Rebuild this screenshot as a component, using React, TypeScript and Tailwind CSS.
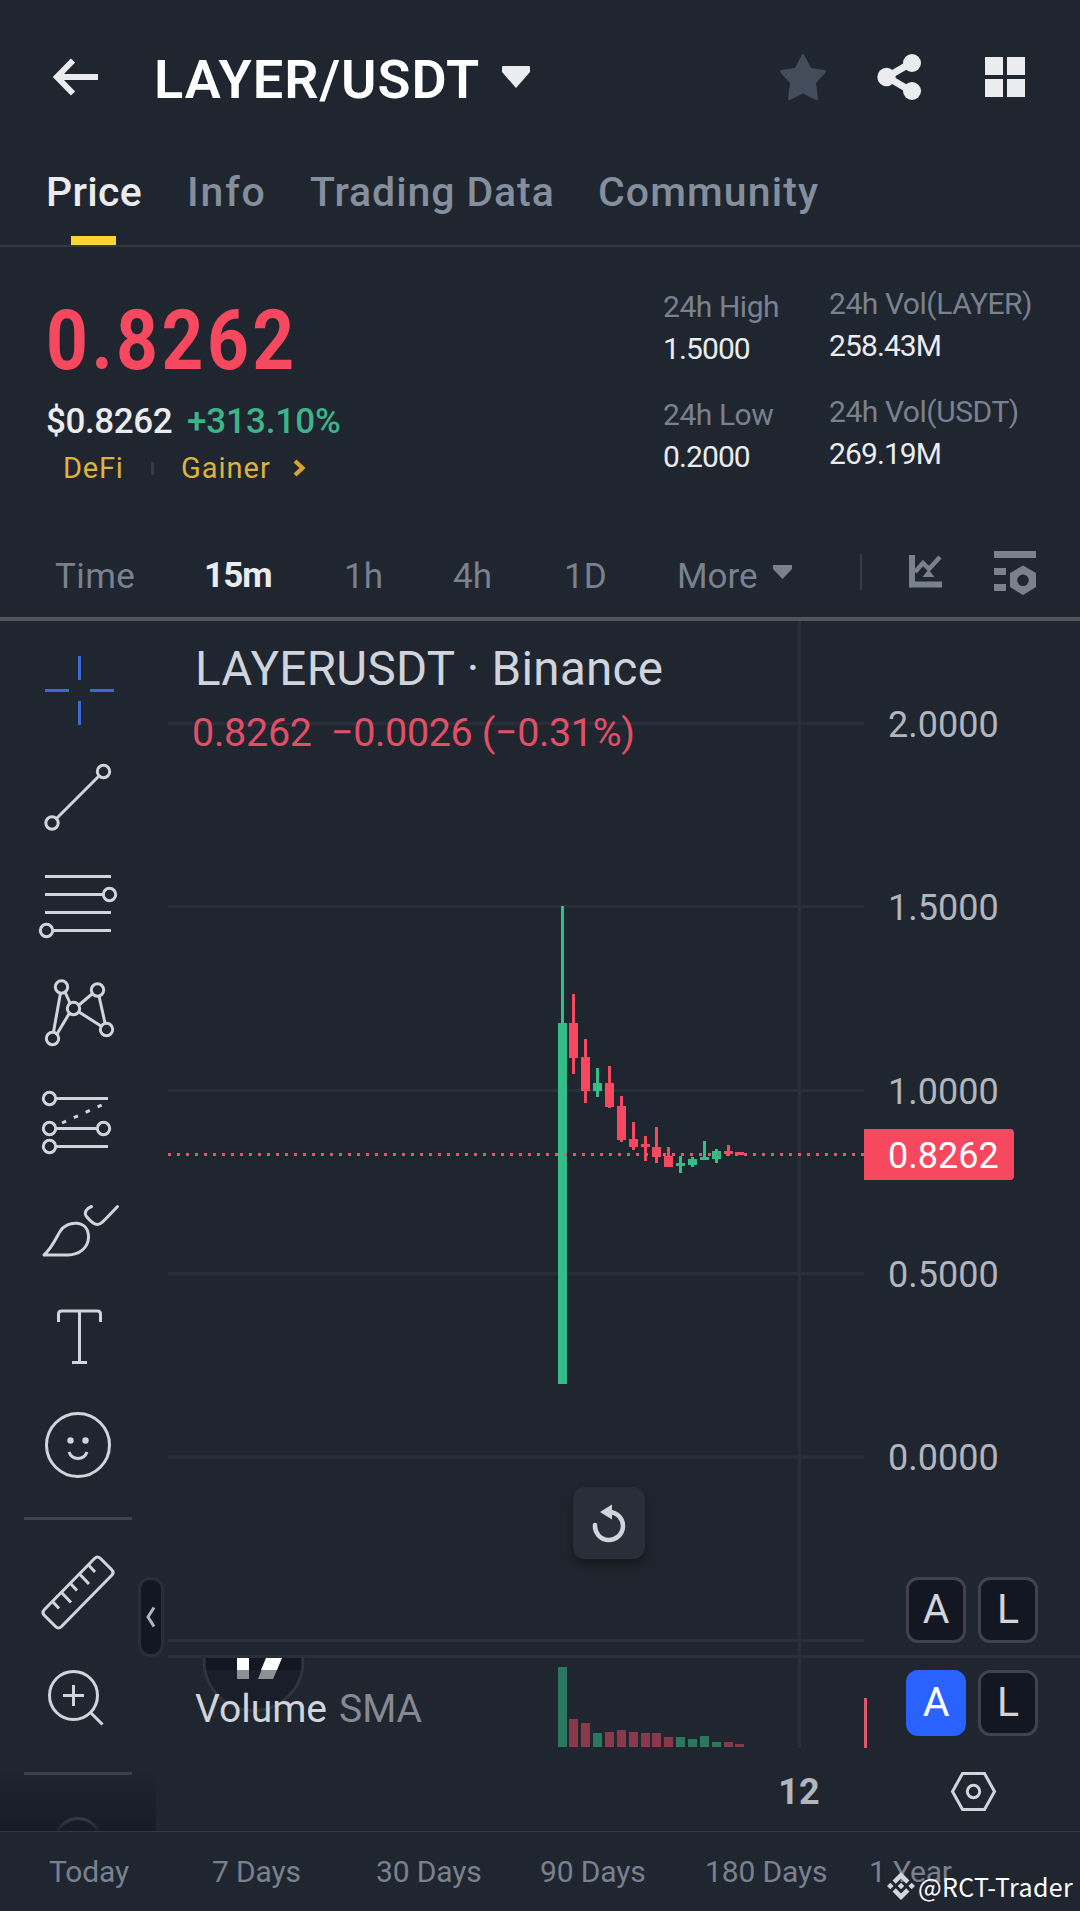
import type { ReactNode } from 'react';

const UP = '#35bd88';
const DOWN = '#f6485f';

// x, width, wick top, wick bottom, body top, body bottom, rising, volume top
const candles: [number, number, number, number, number, number, boolean, number][] = [
  [558, 9, 906, 1384, 1023, 1384, true, 1667],
  [569, 9, 994, 1074, 1023, 1058, false, 1719],
  [581, 9, 1039, 1103, 1057, 1091, false, 1723],
  [593, 9, 1068, 1097, 1083, 1091, true, 1733],
  [605, 9, 1066, 1108, 1083, 1107, false, 1732],
  [617, 9, 1096, 1142, 1106, 1140, false, 1730],
  [629, 9, 1122, 1150, 1139, 1147, false, 1732],
  [641, 9, 1136, 1161, 1144, 1147, false, 1733],
  [652, 9, 1127, 1163, 1147, 1157, false, 1733],
  [664, 9, 1147, 1167, 1156, 1167, false, 1737],
  [676, 9, 1156, 1173, 1163, 1166, true, 1737],
  [688, 9, 1157, 1167, 1159, 1165, true, 1739],
  [700, 9, 1141, 1160, 1157, 1160, true, 1736],
  [712, 9, 1149, 1163, 1151, 1159, true, 1742],
  [724, 9, 1145, 1156, 1151, 1154, false, 1742],
  [735, 9, 1152, 1155, 1152, 1155, false, 1744]
];

const gridLines = [
  { y: 723.5, label: '2.0000' },
  { y: 906.5, label: '1.5000' },
  { y: 1090.5, label: '1.0000' },
  { y: 1273.5, label: '0.5000' },
  { y: 1457, label: '0.0000' },
  { y: 1640.5, label: '' }
];

const tabs = [
  { name: 'Price', style: 'w-[141px] text-[#eaecef] tracking-[0.3px]' },
  { name: 'Info', style: 'w-[123px] text-[#848e9c] tracking-[1.9px]' },
  { name: 'Trading Data', style: 'w-[288px] text-[#848e9c] tracking-[0.9px]' },
  { name: 'Community', style: 'text-[#848e9c] tracking-[1.1px]' }
];

const ranges = [
  { name: 'Today', style: 'w-[163px]' },
  { name: '7 Days', style: 'w-[164px]' },
  { name: '30 Days', style: 'w-[164px]' },
  { name: '90 Days', style: 'w-[165px]' },
  { name: '180 Days', style: 'w-[164px]' },
  { name: '1 Year', style: '' }
];

function Tool({ children }: { children: ReactNode }) {
  return (
    <svg
      className="block h-[108px] w-[156px] shrink-0"
      viewBox="0 0 156 108"
      fill="none"
      stroke="#d1d4dc"
      strokeWidth="3"
    >
      {children}
    </svg>
  );
}

function Stat({ label, value }: { label: string; value: string }) {
  return (
    <div className="text-[30px] leading-[42px] whitespace-nowrap">
      <div className="text-[#79818f] tracking-[-0.45px]">{label}</div>
      <div className="text-[#eaecef] tracking-[-0.9px]">{value}</div>
    </div>
  );
}

function ScaleButton({ label, active = false }: { label: string; active?: boolean }) {
  const look = active
    ? 'border-[#2962ff] bg-[#2962ff] text-white'
    : 'border-[#40434e] bg-[#131722] text-[#d1d4dc]';
  return (
    <div className={`flex h-[66px] w-[60px] items-center justify-center rounded-[12px] border-[3px] pb-[2px] text-[41px] leading-none ${look}`}>
      {label}
    </div>
  );
}

function Header() {
  return (
    <header className="flex h-[154px] items-center pl-[53px]">
      <svg className="w-[45px] h-[38px]" viewBox="0 0 45 38" fill="none" stroke="#eaecef" strokeWidth="6">
        <path d="M45 19H4M20 2.5L4 19l16 16.5" />
      </svg>
      <h1 className="ml-[56px] w-[348px] pt-[6px] text-[54px] leading-none font-semibold whitespace-nowrap text-white tracking-[1px]">
        LAYER/USDT
      </h1>
      <svg className="w-[28px] h-[22px]" viewBox="0 0 28 22" fill="#eaecef">
        <path d="M1 0h26q1 0 1 1v5L14 22 0 6V1q0-1 1-1z" />
      </svg>
      <svg className="ml-[250px] w-[46px] h-[48px]" viewBox="0 0 46 48" fill="#434c5a">
        <path d="M23 1q1 0 1.600 1.400L31 15l13.500 2q2.400.7.700 2.900L36 30l2 15.500q0 2.500-2.200 1.600L23 40.500 10.200 47.100Q8 48 8 45.500L10 30 .8 19.900Q-.9 17.700 1.500 17L15 15l6.400-12.600Q22 1 23 1z" />
      </svg>
      <svg className="ml-[51px] w-[45px] h-[46px]" viewBox="0 0 45 46" fill="#eaecef">
        <path d="M34 9L10 23l24 14" fill="none" stroke="#eaecef" strokeWidth="7" />
        <circle cx="35" cy="9" r="9" />
        <circle cx="9.500" cy="23" r="9.200" />
        <circle cx="35" cy="37" r="9" />
      </svg>
      <div className="ml-[63px] grid w-[40px] grid-cols-2 gap-[4px]">
        <span className="h-[18px] bg-[#eaecef]" />
        <span className="h-[18px] bg-[#eaecef]" />
        <span className="h-[18px] bg-[#eaecef]" />
        <span className="h-[18px] bg-[#eaecef]" />
      </div>
    </header>
  );
}

function PriceSummary() {
  return (
    <section className="flex h-[286px]">
      <div className="w-[663px] pt-[52px] pl-[46px]">
        <div className="origin-left scale-x-87 text-[84px] leading-[84px] font-bold text-[#f6485f] tracking-[4px]">
          0.8262
        </div>
        <div className="mt-[19px] flex text-[35px] leading-[40px] font-medium whitespace-nowrap">
          <span className="w-[141px] text-[#eaecef] tracking-[-0.4px]">$0.8262</span>
          <span className="text-[#3cb488] tracking-[-0.1px]">+313.10%</span>
        </div>
        <div className="mt-[8px] flex items-center pl-[17px] text-[29px] leading-[36px] text-[#deb33b]">
          <span className="w-[88px] tracking-[0.8px]">DeFi</span>
          <span className="h-[13px] w-[3px] bg-[#343b46]" />
          <span className="ml-[27px] w-[112px] tracking-[1px]">Gainer</span>
          <svg className="w-[13px] h-[18px]" viewBox="0 0 13 18" fill="none" stroke="#d6a42a" strokeWidth="4.200">
            <path d="M2 2l7.500 7L2 16" />
          </svg>
        </div>
      </div>
      <div className="flex w-[166px] flex-col gap-[24px] pt-[39px]">
        <Stat label="24h High" value="1.5000" />
        <Stat label="24h Low" value="0.2000" />
      </div>
      <div className="flex flex-col gap-[24px] pt-[36px]">
        <Stat label="24h Vol(LAYER)" value="258.43M" />
        <Stat label="24h Vol(USDT)" value="269.19M" />
      </div>
    </section>
  );
}

function Intervals() {
  return (
    <div className="flex h-[88px] items-center border-b-[4px] border-[#50555e] pl-[55px] text-[35px] text-[#79818f]">
      <span className="w-[149px] pt-[4px] tracking-[0.4px]">Time</span>
      <span className="w-[140px] pt-[3px] font-bold text-[#eaecef] tracking-[-0.9px]">15m</span>
      <span className="w-[109px] pt-[4px]">1h</span>
      <span className="w-[111px] pt-[4px]">4h</span>
      <span className="w-[113px] pt-[4px]">1D</span>
      <span className="w-[96px] pt-[4px]">More</span>
      <svg className="mb-[6px] w-[19px] h-[14px]" viewBox="0 0 19 14" fill="#79818f">
        <path d="M0 0h19v4l-9.500 10L0 4z" />
      </svg>
      <span className="mb-[7px] ml-[68px] h-[36px] w-[2px] bg-[#343b46]" />
      <svg className="mb-[7px] ml-[47px] w-[33px] h-[33px]" viewBox="0 0 33 33" fill="none" stroke="#79818f">
        <path d="M3 0v29.500h30" strokeWidth="6" />
        <path d="M6 17l8-9 6 6L31 2" strokeWidth="4.500" />
        <path d="M19.500 14.500l6 7.500h-12z" fill="#79818f" stroke="none" />
      </svg>
      <svg className="mb-[4px] ml-[52px] w-[42px] h-[44px]" viewBox="0 0 42 44" fill="#79818f">
        <path d="M0 0h42v7H0zM0 17h12v7H0zM0 33h12v7H0z" />
        <path fillRule="evenodd" d="M29 14.500l13 7.500v14l-13 8-13-8V22zM29 23.500a5.800 5.800 0 100 11.600 5.800 5.800 0 000-11.600z" />
      </svg>
    </div>
  );
}

function Toolbar() {
  return (
    <aside className="flex w-[168px] flex-col pt-[16px]">
      <Tool>
        <path d="M79.500 19v24M79.500 64v24M45 53.500h24M90 53.500h24" stroke="#3d68d8" />
      </Tool>
      <Tool>
        <circle cx="52" cy="78" r="6.200" />
        <circle cx="103.500" cy="26.500" r="6.200" />
        <path d="M56.500 73.500L99 31" />
      </Tool>
      <Tool>
        <path d="M45 23.500h66M45 41.500h58M45 59.500h66M53 77.500h58" />
        <circle cx="109.500" cy="41.500" r="6.200" />
        <circle cx="46.500" cy="77.500" r="6.200" />
      </Tool>
      <Tool>
        <circle cx="61.500" cy="26" r="6.200" />
        <circle cx="97.500" cy="29" r="6.200" />
        <circle cx="73.500" cy="47.500" r="6.200" />
        <circle cx="106.500" cy="68.500" r="6.200" />
        <circle cx="52.500" cy="77.500" r="6.200" />
        <path d="M60.500 32L53.500 71M65 31l5 11M69.500 52L57 73M79 44l13-11M79 51l22 14M99 35l6 27" />
      </Tool>
      <Tool>
        <circle cx="49.500" cy="29.500" r="6.200" />
        <circle cx="49.500" cy="59.500" r="6.200" />
        <circle cx="103.500" cy="59.500" r="6.200" />
        <circle cx="49.500" cy="77.500" r="6.200" />
        <path d="M56 29.500h52M56 59.500h41M56 77.500h52" />
        <path d="M62 54l42-19" strokeDasharray="4.500 8.500" />
      </Tool>
      <Tool>
        <path d="M44 78C52 71 57 59 60 54.500c7-12 29-12 28.500 6C88 71 79 78 68 78z" strokeLinejoin="round" />
        <path d="M91.500 29.500c-5 2-8 6-5 10 4 5 7 8 11 8 3 0 4-1 20-18" strokeLinecap="round" />
      </Tool>
      <Tool>
        <path d="M58.500 37v-8q0-3 3-3h36q3 0 3 3v8M79.500 26v51M72 77.500h15" />
      </Tool>
      <Tool>
        <circle cx="78" cy="52" r="31.500" />
        <circle cx="70.500" cy="47.500" r="3.200" fill="#d1d4dc" stroke="none" />
        <circle cx="85.500" cy="47.500" r="3.200" fill="#d1d4dc" stroke="none" />
        <path d="M69 59c3 8.500 15 8.500 18 0" />
      </Tool>
      <div className="mt-[16px] ml-[24px] h-[3px] w-[108px] shrink-0 bg-[#3f434d]" />
      <div className="h-[16px] shrink-0" />
      <Tool>
        <path
          d="M44.500 73.500l50-51q3-3 6 0l11 11q3 3 0 6l-50 51q-3 3-6 0l-11-11q-3-3 0-6z"
          strokeLinejoin="round"
        />
        <path d="M53 66l6 6.500M62 57l9 9.500M71 48l6 6.500M80 38.500l9 9.500M89 29.500l6 6.500" />
      </Tool>
      <Tool>
        <circle cx="73.500" cy="51.500" r="24" />
        <path d="M63 51.500h21M73.500 41v21M91 69l11.500 11.500" />
      </Tool>
      <div className="relative h-[79px] w-[156px] overflow-hidden">
        <div className="mt-[20px] ml-[24px] h-[3px] w-[108px] bg-[#41454f]" />
        <svg className="mt-[42px] ml-[54px] h-[48px] w-[48px]" viewBox="0 0 48 48" fill="none" stroke="#a0a4ae" strokeWidth="3">
          <circle cx="24" cy="24" r="22.500" />
        </svg>
        <div className="absolute inset-x-0 top-[12px] bottom-0 bg-linear-to-b from-[#171b27]/0 to-[#171b27]/95" />
      </div>
    </aside>
  );
}

function Chart() {
  return (
    <div className="relative w-[912px]">
      <svg className="block h-[1210px] w-[912px]" viewBox="168 621 912 1210" fontFamily="Roboto, sans-serif">
        {gridLines.map((line) => (
          <g key={line.y}>
            <path d={`M168 ${line.y}H864`} stroke="#292f38" strokeWidth="3" />
            <text x="888" y={line.y + 13} fontSize="36" fill="#b2b5be">{line.label}</text>
          </g>
        ))}
        <path d="M799.500 621V1748" stroke="#292f38" strokeWidth="3" />
        <path d="M168 1656.500H1080" stroke="#292f38" strokeWidth="3" />

        {candles.map(([x, w, high, low, top, bottom, up, vol]) => (
          <g key={x} fill={up ? UP : DOWN}>
            <rect x={x + 3} y={high} width="3" height={low - high} />
            <rect x={x} y={top} width={w} height={bottom - top} />
            <rect x={x} y={vol} width={w} height={1747 - vol} fill={up ? '#2b775f' : '#8a394a'} />
          </g>
        ))}
        <path d="M168 1154.500H864" stroke="#e0566b" strokeWidth="3" strokeDasharray="3 6" />
        <path d="M864 1129h146q4 0 4 4v43q0 4-4 4H864z" fill="#f6485f" />
        <text x="888" y="1167.500" fontSize="36" fill="#fff">0.8262</text>
        <rect x="864" y="1698" width="3" height="50" fill="#e0566b" />

        <text x="195" y="685" fontSize="47.500" fill="#d1d4dc" textLength="468">LAYERUSDT · Binance</text>
        <text x="192" y="746" fontSize="39.500" fill="#e04f66" textLength="120">0.8262</text>
        <text x="331" y="746" fontSize="39.500" fill="#e04f66" textLength="304">−0.0026 (−0.31%)</text>

        <clipPath id="pane">
          <rect x="168" y="1658" width="300" height="100" />
        </clipPath>
        <g clipPath="url(#pane)">
          <circle cx="253.500" cy="1661" r="49.500" fill="#1a1e29" stroke="#2f343f" strokeWidth="3" />
          <path d="M206 1658h95v12h-95z" fill="#131722" />
          <path d="M237 1658h12v12h-12zM266 1658h16l-5 12h-16z" fill="#fff" />
          <path d="M237 1670h12v9h-12zM261.500 1670h15.500l-4 9h-15z" fill="#8d9096" />
        </g>
        <text x="195" y="1722" fontSize="39" fill="#d1d4dc" textLength="132">Volume</text>
        <text x="339" y="1722" fontSize="39" fill="#868993" textLength="83">SMA</text>
        <text x="799" y="1804" fontSize="36" fontWeight="700" fill="#b2b5be" textAnchor="middle">12</text>

        <g fill="none" stroke="#d1d4dc" strokeWidth="3">
          <path d="M962.500 1773.500h22l10 18-10 18h-22l-10-18z" />
          <circle cx="973.500" cy="1791.500" r="6.200" />
        </g>
      </svg>

      <div className="absolute top-[866px] left-[405px] h-[72px] w-[72px] rounded-[12px] bg-[#2a2e39] shadow-[0_6px_12px_rgba(0,0,0,0.35)]">
        <svg className="h-[72px] w-[72px]" viewBox="0 0 72 72" fill="none" stroke="#d1d4dc" strokeWidth="4.500">
          <path d="M22 38A14 14 0 1037 25" strokeLinecap="round" />
          <path d="M27 25l12-7.500v15z" fill="#d1d4dc" stroke="none" />
        </svg>
      </div>

      <div className="absolute top-[956px] left-[738px] flex gap-[12px]">
        <ScaleButton label="A" />
        <ScaleButton label="L" />
      </div>
      <div className="absolute top-[1049px] left-[738px] flex gap-[12px]">
        <ScaleButton label="A" active />
        <ScaleButton label="L" />
      </div>

      {/* toolbar collapse handle */}
      <div className="absolute top-[956px] left-[-30px] flex h-[80px] w-[26px] items-center justify-center rounded-[12px] border-[3px] border-[#2a2e39] bg-[#131722]">
        <svg className="w-[10px] h-[22px]" viewBox="0 0 10 22" fill="none" stroke="#b2b5be" strokeWidth="3">
          <path d="M8 1.500L2 11l6 9.500" />
        </svg>
      </div>
    </div>
  );
}

export default function App() {
  return (
    <div className="relative h-[1911px] w-[1080px] overflow-hidden bg-[#1f262f] font-[Roboto,sans-serif]">
      <Header />
      <nav className="relative flex h-[93px] border-b-2 border-[#333943] pl-[46px] text-[41px] leading-[76px] font-medium whitespace-nowrap">
        {tabs.map((tab) => (
          <span key={tab.name} className={tab.style}>{tab.name}</span>
        ))}
        <span className="absolute bottom-0 left-[71px] h-[9px] w-[45px] bg-[#fcd535]" />
      </nav>
      <PriceSummary />
      <Intervals />
      <div className="flex h-[1210px]">
        <Toolbar />
        <Chart />
      </div>
      <footer className="flex h-[80px] items-center border-t border-[#333943] pl-[49px] text-[30px] whitespace-nowrap text-[#79818f] tracking-[-0.15px]">
        {ranges.map((range) => (
          <span key={range.name} className={range.style}>{range.name}</span>
        ))}
      </footer>

      <div className="absolute right-[7px] bottom-[7px] flex items-center text-white">
        <svg className="w-[28px] h-[28px]" viewBox="0 0 28 28" fill="#d5d6d8">
          <path d="M14 0l8.500 8.500-3.300 3.300L14 6.600l-5.200 5.200-3.300-3.300zM14 28l8.500-8.500-3.300-3.300-5.200 5.200-5.200-5.200-3.300 3.300zM14 10.700l3.300 3.300-3.300 3.300-3.300-3.300zM3.300 10.700L6.600 14l-3.300 3.300L0 14zM24.700 10.700L28 14l-3.300 3.300-3.300-3.300z" />
        </svg>
        <span className="ml-[3px] font-['Noto_Sans_CJK_SC',sans-serif] text-[25px] leading-[36px] tracking-[0.35px]">@RCT-Trader</span>
      </div>
    </div>
  );
}
